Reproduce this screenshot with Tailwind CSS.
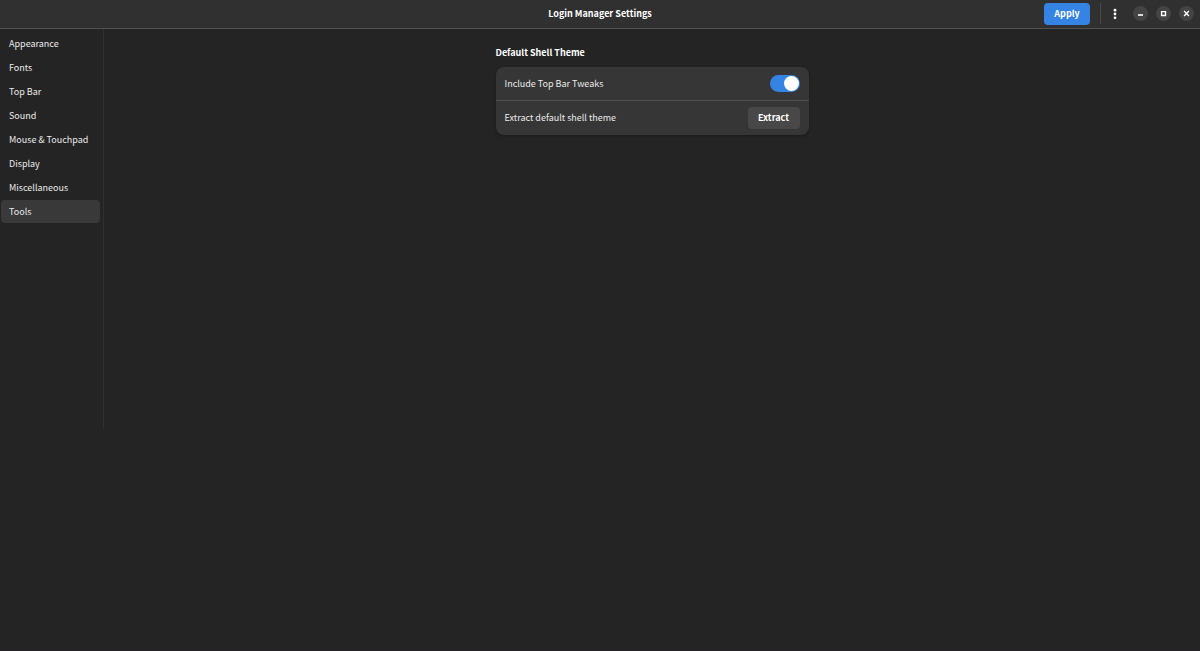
<!DOCTYPE html>
<html lang="en">

<head>
    <meta charset="UTF-8">
    <meta name="viewport" content="width=device-width, initial-scale=1.0">
    <title>Login Manager Settings</title>
    <script src="https://cdn.jsdelivr.net/npm/@tailwindcss/browser@4"></script>
</head>

<body class="min-h-screen flex flex-col bg-[#242424] border-b border-[#2c2028] text-[#eaeaea] text-[9px] leading-4 font-['Noto_Sans_CJK_SC',sans-serif]">
    <!-- Header bar -->
    <header class="grid grid-cols-[1fr_auto_1fr] items-center h-[29px] pb-px bg-[#303030] border-b border-[#505050]">
        <h1 class="col-start-2 font-bold text-white">Login Manager Settings</h1>
        <div class="flex items-center justify-end pr-[6px]">
            <button type="button" class="w-[46px] h-[22px] rounded bg-[#3584e4] font-bold text-white">Apply</button>
            <div class="w-px h-[21px] ml-[10px] bg-[#484848]"></div>
            <button type="button" aria-label="Main menu" class="flex items-center justify-center w-7 h-[22px]">
                <svg class="size-3" viewBox="0 0 12 12" fill="#fff"><circle cx="6" cy="2.2" r="1.4" /><circle cx="6" cy="6" r="1.4" /><circle cx="6" cy="9.8" r="1.4" /></svg>
            </button>
            <div class="flex gap-2 ml-1">
                <button type="button" aria-label="Minimize" class="size-[15px] rounded-full bg-[#444]">
                    <svg viewBox="0 0 15 15" fill="#fff"><path d="M5 8.2h5v1.6H5z" /></svg>
                </button>
                <button type="button" aria-label="Maximize" class="size-[15px] rounded-full bg-[#444]">
                    <svg viewBox="0 0 15 15" fill="none" stroke="#fff" stroke-width="1.4"><path d="M5.6 5.6h3.9v3.9H5.6z" /></svg>
                </button>
                <button type="button" aria-label="Close" class="size-[15px] rounded-full bg-[#444]">
                    <svg viewBox="0 0 15 15" fill="none" stroke="#fff" stroke-width="1.4"><path d="M5.1 5.1l4.8 4.8M9.9 5.1l-4.8 4.8" /></svg>
                </button>
            </div>
        </div>
    </header>

    <div class="flex flex-1 items-start">
        <!-- Sidebar -->
        <nav class="flex flex-col gap-px shrink-0 w-[104px] h-[399px] pt-[3px] pl-px pr-[3px] border-r border-[#303030] whitespace-nowrap">
            <a href="#" class="h-[23px] px-2 py-1 rounded">Appearance</a>
            <a href="#" class="h-[23px] px-2 py-1 rounded">Fonts</a>
            <a href="#" class="h-[23px] px-2 py-1 rounded">Top Bar</a>
            <a href="#" class="h-[23px] px-2 py-1 rounded">Sound</a>
            <a href="#" class="h-[23px] px-2 py-1 rounded">Mouse &amp; Touchpad</a>
            <a href="#" class="h-[23px] px-2 py-1 rounded">Display</a>
            <a href="#" class="h-[23px] px-2 py-1 rounded">Miscellaneous</a>
            <a href="#" aria-current="page" class="h-[23px] px-2 py-1 rounded bg-[#393939]">Tools</a>
        </nav>

        <!-- Tools page -->
        <main class="flex-1 pt-4">
            <section class="w-full max-w-[313px] mx-auto">
                <h2 class="mb-[6px] font-bold text-white">Default Shell Theme</h2>
                <div class="rounded-lg bg-[#363636] shadow-sm shadow-black/20">
                    <div class="flex items-center justify-between h-[34px] px-[9px] border-b border-[#4c4c4c]">
                        <label for="top-bar-tweaks">Include Top Bar Tweaks</label>
                        <input type="checkbox" role="switch" id="top-bar-tweaks" checked class="appearance-none flex items-center w-[30px] h-[17px] p-px rounded-full bg-[#555] checked:bg-[#3584e4] checked:justify-end before:size-[15px] before:rounded-full before:bg-white">
                    </div>
                    <div class="flex items-center justify-between h-[34px] px-[9px]">
                        <span id="extract-label">Extract default shell theme</span>
                        <button type="button" aria-describedby="extract-label" class="w-[52px] h-[22px] rounded bg-[#484848] font-bold text-white">Extract</button>
                    </div>
                </div>
            </section>
        </main>
    </div>
</body>

</html>
